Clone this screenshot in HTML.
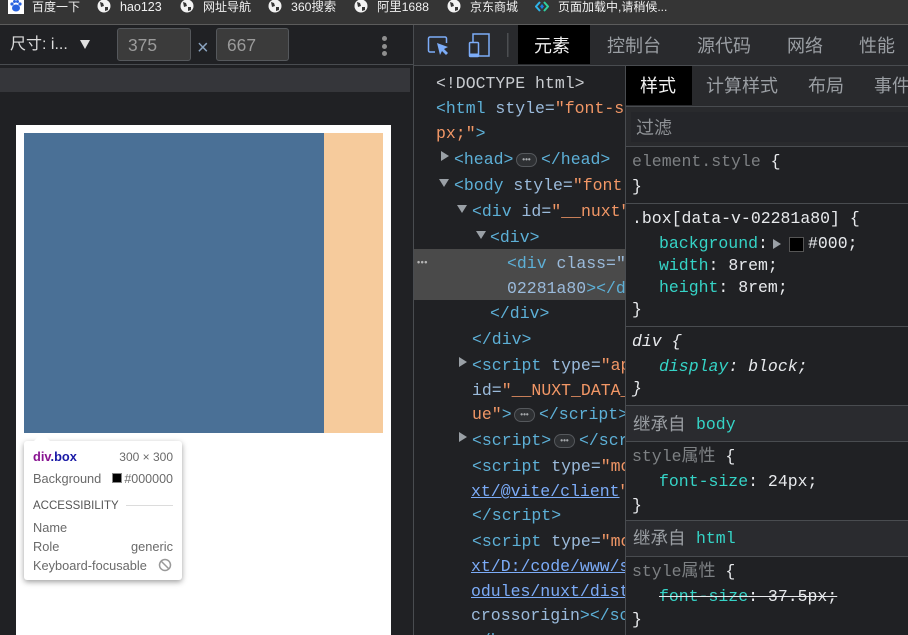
<!DOCTYPE html>
<html><head><meta charset="utf-8">
<style>
*{box-sizing:border-box}
html,body{margin:0;padding:0;width:908px;height:635px;overflow:hidden;background:#202124}
#w{position:absolute;left:0;top:0;width:908px;height:635px;overflow:hidden;background:#202124;font-family:"Liberation Sans","Noto Sans CJK SC",sans-serif}
.a{position:absolute}
.t{position:absolute;white-space:pre;line-height:20px}
.m{position:absolute;white-space:pre;font-family:"Liberation Mono","Noto Sans CJK SC",monospace;font-size:16.5px;line-height:20px;color:#e8eaed;margin-top:1px}
.bk{font-size:12px;color:#f0f0f0;top:-3px}
.tab{font-size:18px;color:#9a9ea3;top:36px}
.b{color:#5db0d7}.n{color:#5db0d7}.at{color:#9bbbdc}.v{color:#f29766}.u{color:#7cacf8;text-decoration:underline}.w{color:#e8eaed}
.k{color:#35d4c7}.g{color:#7d8083}
.l{position:absolute;background:#494c50;height:1px}
.tri{position:absolute;width:0;height:0}
.r{border-top:5.5px solid transparent;border-bottom:5.5px solid transparent;border-left:8px solid #9aa0a6}
.d{border-left:5.5px solid transparent;border-right:5.5px solid transparent;border-top:8px solid #9aa0a6}
.dots{position:absolute;width:21px;height:14px;border:1px solid #55585c;border-radius:7px;background:#2e3033;color:#a6a9ac;font-size:8px;line-height:11px;text-align:center;font-weight:bold}
.tip{font-size:12.8px;color:#6a6a6a}
</style></head><body><div id="w">

<!-- bookmarks bar -->
<div class="a" style="left:0;top:0;width:908px;height:24px;background:#353535"></div>
<div class="a" style="left:8px;top:-3px;width:16px;height:17px;background:#fff"></div>
<svg class="a" style="left:8px;top:-2px" width="16" height="16"><ellipse cx="8" cy="10" rx="4" ry="3.5" fill="#2b64e0"/><circle cx="4" cy="6" r="1.6" fill="#2b64e0"/><circle cx="12" cy="6" r="1.6" fill="#2b64e0"/><circle cx="6.5" cy="3.5" r="1.5" fill="#2b64e0"/><circle cx="9.5" cy="3.5" r="1.5" fill="#2b64e0"/></svg>
<span class="t bk" style="left:32px">百度一下</span>
<svg class="a" style="left:97px;top:-1px" width="14" height="14"><circle cx="7" cy="7" r="6.5" fill="#f2f2f2"/><path d="M3 3l3 1 1 3-3 1zM8 8l3 0 0 3-3 1z" fill="#353535"/></svg>
<span class="t bk" style="left:120px;font-size:12.5px">hao123</span>
<svg class="a" style="left:180px;top:-1px" width="14" height="14"><circle cx="7" cy="7" r="6.5" fill="#f2f2f2"/><path d="M3 3l3 1 1 3-3 1zM8 8l3 0 0 3-3 1z" fill="#353535"/></svg>
<span class="t bk" style="left:203px">网址导航</span>
<svg class="a" style="left:268px;top:-1px" width="14" height="14"><circle cx="7" cy="7" r="6.5" fill="#f2f2f2"/><path d="M3 3l3 1 1 3-3 1zM8 8l3 0 0 3-3 1z" fill="#353535"/></svg>
<span class="t bk" style="left:291px;font-size:12.3px">360搜索</span>
<svg class="a" style="left:354px;top:-1px" width="14" height="14"><circle cx="7" cy="7" r="6.5" fill="#f2f2f2"/><path d="M3 3l3 1 1 3-3 1zM8 8l3 0 0 3-3 1z" fill="#353535"/></svg>
<span class="t bk" style="left:377px;font-size:12.3px">阿里1688</span>
<svg class="a" style="left:447px;top:-1px" width="14" height="14"><circle cx="7" cy="7" r="6.5" fill="#f2f2f2"/><path d="M3 3l3 1 1 3-3 1zM8 8l3 0 0 3-3 1z" fill="#353535"/></svg>
<span class="t bk" style="left:470px">京东商城</span>
<svg class="a" style="left:535px;top:1px" width="14" height="11"><path d="M5 1L1 5.5 5 10" fill="none" stroke="#2fb4e8" stroke-width="2"/><path d="M9 1l4 4.5-4 4.5" fill="none" stroke="#2fd0a0" stroke-width="2"/><path d="M7 3l2 2.500-2 2.500-2-2.500z" fill="#1a7fe0"/></svg>
<span class="t bk" style="left:558px">页面加载中,请稍候...</span>
<div class="a" style="left:0;top:24px;width:908px;height:1px;background:#5c5c5c"></div>

<!-- device toolbar -->
<div class="a" style="left:0;top:25px;width:413px;height:39px;background:#202124"></div>
<span class="t" style="left:10px;top:35px;font-size:16px;color:#dcdcdc">尺寸: i...</span>
<div class="tri" style="left:80px;top:40px;border-left:5.5px solid transparent;border-right:5.5px solid transparent;border-top:9px solid #e0e0e0"></div>
<div class="a" style="left:117px;top:28px;width:74px;height:33px;background:#3b3b3b;border:1px solid #55585c;border-radius:3px"></div>
<span class="t" style="left:128px;top:35px;font-size:17.4px;color:#9b9b9b">375</span>
<span class="t" style="left:197px;top:38px;font-size:20px;color:#8ba4c0">×</span>
<div class="a" style="left:216px;top:28px;width:73px;height:33px;background:#3b3b3b;border:1px solid #55585c;border-radius:3px"></div>
<span class="t" style="left:227px;top:35px;font-size:17.4px;color:#9b9b9b">667</span>
<div class="a" style="left:382px;top:36px;width:5px;height:5px;border-radius:50%;background:#8f8f8f"></div>
<div class="a" style="left:382px;top:43.500px;width:5px;height:5px;border-radius:50%;background:#8f8f8f"></div>
<div class="a" style="left:382px;top:51px;width:5px;height:5px;border-radius:50%;background:#8f8f8f"></div>
<div class="a" style="left:0;top:64px;width:413px;height:1px;background:#494c50"></div>
<div class="a" style="left:0;top:68px;width:410px;height:24px;background:#35363a"></div>

<!-- viewport -->
<div class="a" style="left:16px;top:125px;width:375px;height:510px;background:#fff"></div>
<div class="a" style="left:24px;top:133px;width:359px;height:300px;background:#f6cb9c"></div>
<div class="a" style="left:24px;top:133px;width:300px;height:300px;background:#4a7096"></div>

<!-- tooltip -->
<div class="a" style="left:24px;top:441px;width:158px;height:139px;background:#fff;border-radius:3px;box-shadow:0 2px 6px rgba(0,0,0,.38)"></div>
<div class="tri" style="left:34px;top:433px;border-left:8px solid transparent;border-right:8px solid transparent;border-bottom:8px solid #fff"></div>
<span class="t" style="left:33px;top:447px;font-size:12.8px;font-weight:bold"><span style="color:#881391">div</span><span style="color:#1a1aa6">.box</span></span>
<span class="t" style="right:735px;top:447px;font-size:12px;color:#6a6a6a">300 × 300</span>
<span class="t tip" style="left:33px;top:469px">Background</span>
<div class="a" style="left:112px;top:473px;width:10px;height:10px;background:#000;border:1px solid #888"></div>
<span class="t" style="right:735px;top:469px;font-size:12.5px;color:#6a6a6a">#000000</span>
<span class="t" style="left:33px;top:496px;font-size:11.500px;color:#555">ACCESSIBILITY</span>
<div class="a" style="left:126px;top:505px;width:47px;height:1px;background:#dcdcdc"></div>
<span class="t tip" style="left:33px;top:518px">Name</span>
<span class="t tip" style="left:33px;top:537px">Role</span>
<span class="t tip" style="right:735px;top:537px">generic</span>
<span class="t tip" style="left:33px;top:556px">Keyboard-focusable</span>
<svg class="a" style="left:158px;top:558px" width="14" height="14"><circle cx="7" cy="7" r="5.500" fill="none" stroke="#999" stroke-width="1.500"/><path d="M3 3l8 8" stroke="#999" stroke-width="1.500"/></svg>

<!-- devtools -->
<div class="a" style="left:413px;top:25px;width:1px;height:610px;background:#494c50"></div>
<div class="a" style="left:414px;top:25px;width:494px;height:40px;background:#292a2d"></div>
<svg class="a" style="left:414px;top:25px" width="110" height="40">
<path d="M21 27h-5a1.500 1.500 0 0 1-1.500-1.500V13.500a1.500 1.500 0 0 1 1.500-1.500h15a1.500 1.500 0 0 1 1.500 1.500V18" fill="none" stroke="#7cacf8" stroke-width="1.500"/>
<path d="M23 18l11 4-4 2 4 4-2 2-4-4-2 4z" fill="#7cacf8"/>
<path d="M59 17V9h16v22H64" fill="none" stroke="#7cacf8" stroke-width="1.500"/>
<rect x="55.500" y="17.500" width="9" height="14" rx="1" fill="none" stroke="#7cacf8" stroke-width="1.500"/>
<rect x="55.500" y="28.500" width="9" height="3" fill="#7cacf8"/>
<rect x="93" y="8" width="1.500" height="24" fill="#4c4e51"/>
</svg>
<div class="a" style="left:518px;top:25px;width:72px;height:39px;background:#000"></div>
<span class="t tab" style="left:534px;color:#f0f0f0">元素</span>
<span class="t tab" style="left:607px">控制台</span>
<span class="t tab" style="left:697px">源代码</span>
<span class="t tab" style="left:787px">网络</span>
<span class="t tab" style="left:859px">性能</span>
<div class="a" style="left:414px;top:65px;width:494px;height:1px;background:#494c50"></div>

<!-- DOM tree -->
<span class="m" style="left:436px;top:73px;color:#c9ccd0">&lt;!DOCTYPE html&gt;</span>
<span class="m n" style="left:436px;top:98px">&lt;html <span class="at">style=</span><span class="v">"font-s</span></span>
<span class="m" style="left:436px;top:123px"><span class="v">px;"</span><span class="b">&gt;</span></span>
<div class="tri r" style="left:441px;top:151px"></div>
<span class="m n" style="left:454px;top:149px">&lt;head&gt;</span>
<div class="dots" style="left:516px;top:153px">•••</div>
<span class="m n" style="left:541px;top:149px">&lt;/head&gt;</span>
<div class="tri d" style="left:439px;top:179px"></div>
<span class="m n" style="left:454px;top:175px">&lt;body <span class="at">style=</span><span class="v">"font-</span></span>
<div class="tri d" style="left:457px;top:205px"></div>
<span class="m n" style="left:472px;top:201px">&lt;div <span class="at">id=</span><span class="v">"__nuxt"</span></span>
<div class="tri d" style="left:476px;top:231px"></div>
<span class="m n" style="left:490px;top:227px">&lt;div&gt;</span>
<div class="a" style="left:414px;top:249px;width:212px;height:51px;background:#4a4a4a"></div>
<span class="t" style="left:417px;top:252px;font-size:9px;color:#b5b5b5;font-weight:bold;letter-spacing:.5px">•••</span>
<span class="m n" style="left:507px;top:253px">&lt;div <span class="at">class=</span><span class="v" style="color:#9bbbdc">"</span></span>
<span class="m" style="left:507px;top:278px"><span style="color:#9bbbdc">02281a80</span><span class="n">&gt;&lt;/d</span></span>
<span class="m n" style="left:490px;top:303px">&lt;/div&gt;</span>
<span class="m n" style="left:472px;top:329px">&lt;/div&gt;</span>
<div class="tri r" style="left:459px;top:357px"></div>
<span class="m n" style="left:472px;top:355px">&lt;script <span class="at">type=</span><span class="v">"ap</span></span>
<span class="m" style="left:472px;top:380px"><span class="at">id=</span><span class="v">"__NUXT_DATA_</span></span>
<span class="m" style="left:472px;top:404px"><span class="v">ue"</span><span class="n">&gt;</span></span>
<div class="dots" style="left:514px;top:408px">•••</div>
<span class="m n" style="left:539px;top:404px">&lt;/script&gt;</span>
<div class="tri r" style="left:459px;top:432px"></div>
<span class="m n" style="left:472px;top:430px">&lt;script&gt;</span>
<div class="dots" style="left:554px;top:434px">•••</div>
<span class="m n" style="left:579px;top:430px">&lt;/scr</span>
<span class="m n" style="left:472px;top:456px">&lt;script <span class="at">type=</span><span class="v">"mo</span></span>
<span class="m" style="left:471px;top:481px"><span class="u">xt/@vite/client</span><span class="v">"</span></span>
<span class="m n" style="left:472px;top:505px">&lt;/script&gt;</span>
<span class="m n" style="left:472px;top:531px">&lt;script <span class="at">type=</span><span class="v">"mo</span></span>
<span class="m u" style="left:471px;top:556px">xt/D:/code/www/s</span>
<span class="m u" style="left:471px;top:581px">odules/nuxt/dist</span>
<span class="m" style="left:471px;top:605px"><span class="at">crossorigin</span><span class="n">&gt;&lt;/sc</span></span>
<span class="m n" style="left:471px;top:630px">&lt;/b</span>

<!-- styles pane -->
<div class="a" style="left:625px;top:66px;width:283px;height:569px;background:#202124;border-left:1px solid #494c50"></div>
<div class="a" style="left:626px;top:66px;width:282px;height:40px;background:#292a2d"></div>
<div class="a" style="left:626px;top:66px;width:66px;height:39px;background:#000"></div>
<span class="t tab" style="left:640px;top:76px;color:#f0f0f0">样式</span>
<span class="t tab" style="left:706px;top:76px">计算样式</span>
<span class="t tab" style="left:808px;top:76px">布局</span>
<span class="t tab" style="left:874px;top:76px">事件</span>
<div class="l" style="left:626px;top:106px;width:282px"></div>
<div class="a" style="left:626px;top:107px;width:282px;height:39px;background:#292a2d"></div>
<div class="a" style="left:631px;top:112px;width:277px;height:30px;background:#25262a"></div>
<span class="t" style="left:636px;top:118px;font-size:18px;color:#8f9296">过滤</span>
<div class="l" style="left:626px;top:146px;width:282px"></div>

<span class="m g" style="left:632px;top:151px">element.style <span class="w">{</span></span>
<span class="m" style="left:632px;top:176px">}</span>
<div class="l" style="left:626px;top:203px;width:282px"></div>
<span class="m" style="left:632px;top:208px">.box[data-v-02281a80] {</span>
<span class="m" style="left:659px;top:233px"><span class="k">background</span>:</span>
<div class="tri r" style="left:773px;top:239px"></div>
<div class="a" style="left:789px;top:237px;width:15px;height:15px;background:#000;border:1px solid #555"></div>
<span class="m" style="left:808px;top:233px">#000;</span>
<span class="m" style="left:659px;top:255px"><span class="k">width</span>: 8rem;</span>
<span class="m" style="left:659px;top:277px"><span class="k">height</span>: 8rem;</span>
<span class="m" style="left:632px;top:299px">}</span>
<div class="l" style="left:626px;top:326px;width:282px"></div>
<span class="m" style="left:632px;top:331px;font-style:italic">div {</span>
<span class="m" style="left:659px;top:356px;font-style:italic"><span class="k">display</span>: block;</span>
<span class="m" style="left:632px;top:378px;font-style:italic">}</span>

<div class="l" style="left:626px;top:405px;width:282px"></div>
<div class="a" style="left:626px;top:406px;width:282px;height:35px;background:#2a2b2f"></div>
<span class="t" style="left:633px;top:414px;font-size:17.500px;color:#9a9ea3">继承自</span>
<span class="m k" style="left:696px;top:414px">body</span>
<div class="l" style="left:626px;top:441px;width:282px"></div>
<span class="m g" style="left:632px;top:446px">style<span style="font-size:17px">属性</span> <span class="w">{</span></span>
<span class="m" style="left:659px;top:471px"><span class="k">font-size</span>: 24px;</span>
<span class="m" style="left:632px;top:495px">}</span>
<div class="l" style="left:626px;top:520px;width:282px"></div>
<div class="a" style="left:626px;top:521px;width:282px;height:35px;background:#2a2b2f"></div>
<span class="t" style="left:633px;top:528px;font-size:17.500px;color:#9a9ea3">继承自</span>
<span class="m k" style="left:696px;top:528px">html</span>
<div class="l" style="left:626px;top:556px;width:282px"></div>
<span class="m g" style="left:632px;top:561px">style<span style="font-size:17px">属性</span> <span class="w">{</span></span>
<span class="m" style="left:659px;top:586px;text-decoration:line-through"><span class="k">font-size</span>: 37.5px;</span>
<span class="m" style="left:632px;top:609px">}</span>

</div></body></html>
